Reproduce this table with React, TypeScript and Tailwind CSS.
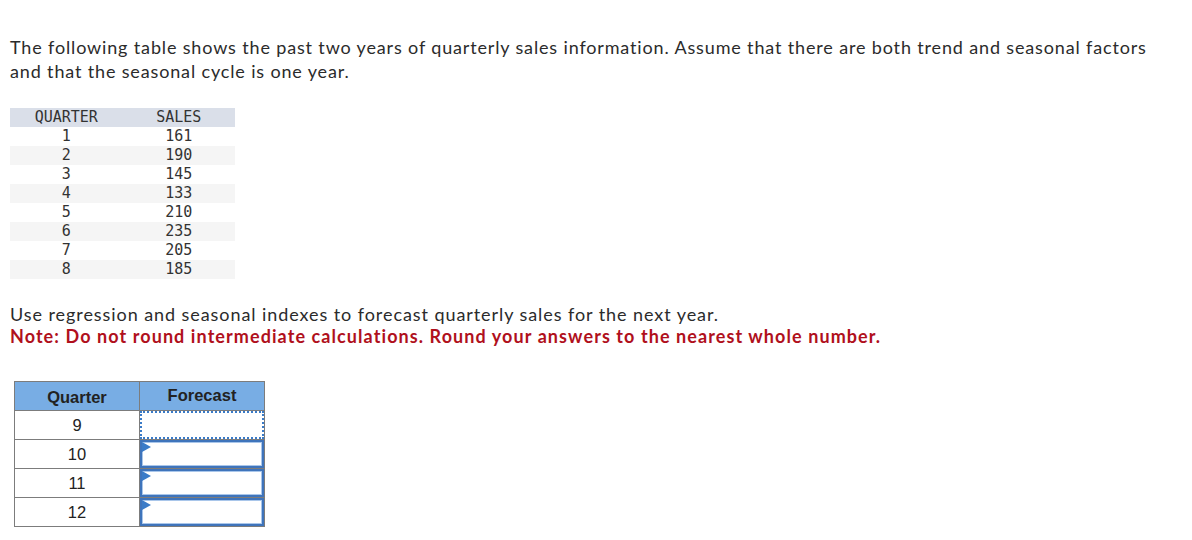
const sales = [
  { q: 1, s: 161 },
  { q: 2, s: 190 },
  { q: 3, s: 145 },
  { q: 4, s: 133 },
  { q: 5, s: 210 },
  { q: 6, s: 235 },
  { q: 7, s: 205 },
  { q: 8, s: 185 },
];

function Marker() {
  return (
    <svg className="absolute left-0 top-0" width="9" height="10" viewBox="0 0 9 10">
      <path d="M0 0 L9 5 L0 10 Z" fill="#3a7bc8" />
    </svg>
  );
}

export default function App() {
  return (
    <div className="min-h-screen bg-white pl-[10px] pt-[35px] text-[#2b2b2b] font-['Lato',sans-serif]">
      <p className="text-[18px] leading-[24px] tracking-[0.85px] max-w-[1150px]">
        The following table shows the past two years of quarterly sales information. Assume that there are both trend and seasonal factors and that the seasonal cycle is one year.
      </p>

      {/* data table */}
      <table className="mt-[25px] w-[225px] text-[15px] leading-[19px] text-[#333] font-['DejaVu_Sans_Mono',monospace] border-collapse">
        <thead>
          <tr className="bg-[#dadfe9]">
            <th className="font-normal w-1/2 h-[19px]">QUARTER</th>
            <th className="font-normal w-1/2">SALES</th>
          </tr>
        </thead>
        <tbody>
          {sales.map((r, i) => (
            <tr key={r.q} className={i % 2 === 1 ? "bg-[#f5f5f5]" : "bg-white"}>
              <td className="text-center h-[19px]">{r.q}</td>
              <td className="text-center">{r.s}</td>
            </tr>
          ))}
        </tbody>
      </table>

      <div className="mt-[24px] text-[18px] leading-[22px]">
        <p className="tracking-[0.93px]">Use regression and seasonal indexes to forecast quarterly sales for the next year.</p>
        <p className="font-bold text-[#b0101c] tracking-[1.08px]">
          Note: Do not round intermediate calculations. Round your answers to the nearest whole number.
        </p>
      </div>

      {/* forecast table */}
      <table className="ml-[4px] mt-[34px] border-collapse font-['Liberation_Sans',sans-serif] text-[16.5px] text-[#222]">
        <thead>
          <tr className="bg-[#78ade4]">
            <th className="border border-[#7c7c7c] w-[125px] h-[29px] pt-[2px] font-bold">Quarter</th>
            <th className="border border-[#7c7c7c] w-[125px] pb-[1px] font-bold">Forecast</th>
          </tr>
        </thead>
        <tbody>
          {[9, 10, 11, 12].map((q, i) => (
            <tr key={q}>
              <td className="border border-[#7c7c7c] h-[29px] p-0 text-center">{q}</td>
              <td className="border border-[#7c7c7c] p-0">
                {i === 0 ? (
                  <div className="h-[28px] border-2 border-dotted border-[#3a7bc8]" />
                ) : (
                  <div className="relative h-[28px] border-2 border-[#3f74bb]">
                    <div className="h-full border border-[#a9c6ea]" />
                    <Marker />
                  </div>
                )}
              </td>
            </tr>
          ))}
        </tbody>
      </table>
    </div>
  );
}
